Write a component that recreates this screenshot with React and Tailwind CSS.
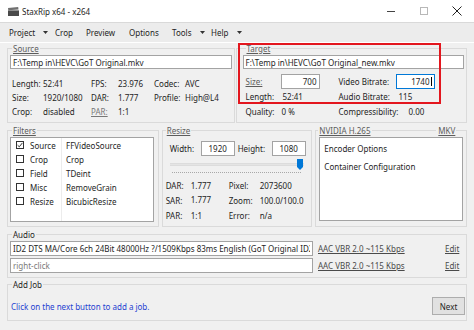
import React from "react";

function Arrow() {
  return (
    <svg width="5" height="3" viewBox="0 0 5 3" className="block shrink-0">
      <path d="M0 0H5L2.5 3Z" fill="#333" />
    </svg>
  );
}

function MenuItem({ label, w, tw, arrow }) {
  return (
    <div className={"flex items-center shrink-0 " + w}>
      <span className={"shrink-0 " + (tw || "")}>{label}</span>
      {arrow && <Arrow />}
    </div>
  );
}

function Box({ className = "", children }) {
  return (
    <div
      className={
        "bg-white border border-[#a3a3a3] flex items-center px-[2px] overflow-hidden whitespace-nowrap " +
        className
      }
    >
      {children}
    </div>
  );
}

function Legend({ children, className = "" }) {
  return (
    <legend className={"px-[1px] leading-[11px] " + className}>{children}</legend>
  );
}

function Check({ on }) {
  return (
    <div className="w-[8px] h-[8px] border border-[#333] bg-white shrink-0 flex items-center justify-center">
      {on && (
        <svg width="6" height="6" viewBox="0 0 6 6">
          <path d="M0.6 3.2L2.3 4.8L5.4 0.9" stroke="#222" strokeWidth="0.9" fill="none" />
        </svg>
      )}
    </div>
  );
}

export default function App() {
  const filters = [
    ["Source", "FFVideoSource", true],
    ["Crop", "Crop", false],
    ["Field", "TDeint", false],
    ["Misc", "RemoveGrain", false],
    ["Resize", "BicubicResize", false],
  ];
  return (
    <div className="relative w-[474px] h-[330px] overflow-hidden bg-[#f0f0f0] font-['Noto_Sans',sans-serif] text-[8px] leading-[11px] text-[#1e1e1e]">
      {/* Title bar */}
      <div className="h-[22px] bg-white flex items-center">
        <svg className="ml-[8px] shrink-0" width="11" height="9" viewBox="0 0 11 9">
          <path d="M0 3.4H11V9H0Z" fill="#4a4a4a" />
          <path d="M0 0.9L10.2 0L10.5 2.5L0.3 3.3Z" fill="#707070" />
        </svg>
        <span className="ml-[3px]">StaxRip x64 - x264</span>
        <div className="ml-auto flex h-full">
          <div className="w-[32px] flex items-center justify-center">
            <div className="w-[8px] h-px bg-[#444]" />
          </div>
          <div className="w-[33px] flex items-center justify-center">
            <div className="w-[8px] h-[8px] border border-[#b8b8b8]" />
          </div>
          <div className="w-[34px] flex items-center justify-center">
            <svg width="10" height="10" viewBox="0 0 10 10">
              <path d="M0.5 0.5L9.5 9.5M9.5 0.5L0.5 9.5" stroke="#222" strokeWidth="1" />
            </svg>
          </div>
        </div>
      </div>

      {/* Menu bar */}
      <div className="h-[21px] border-t border-t-[#d9d9d9] border-b border-b-white bg-[#ececec] flex items-center pl-[9px]">
        <MenuItem label="Project" w="w-[46px]" tw="w-[34px]" arrow />
        <MenuItem label="Crop" w="w-[31px]" />
        <MenuItem label="Preview" w="w-[43px]" />
        <MenuItem label="Options" w="w-[43px]" />
        <MenuItem label="Tools" w="w-[39px]" tw="w-[28px]" arrow />
        <MenuItem label="Help" w="w-[40px]" tw="w-[26px]" arrow />
      </div>

      <div className="px-[7px]">
        {/* Row 1 */}
        <div className="flex gap-[1px]">
          <fieldset className="w-[228px] h-[80px] min-w-0 border border-[#dadada]">
            <Legend className="ml-[4px] underline text-[#5c5c5c]">Source</Legend>
            <Box className="h-[14px] mt-[1px] mx-[2px]">F:\Temp in\HEVC\GoT Original.mkv</Box>
            <div className="mt-[7px] pl-[4px] flex flex-col">
              <div className="h-[14px] flex items-center whitespace-nowrap">
                <span className="w-[31px]">Length:</span>
                <span className="w-[48px]">52:41</span>
                <span className="w-[27px]">FPS:</span>
                <span className="w-[36px]">23.976</span>
                <span className="w-[31px]">Codec:</span>
                <span>AVC</span>
              </div>
              <div className="h-[14px] flex items-center whitespace-nowrap">
                <span className="w-[31px]">Size:</span>
                <span className="w-[48px]">1920/1080</span>
                <span className="w-[27px]">DAR:</span>
                <span className="w-[36px]">1.777</span>
                <span className="w-[31px]">Profile:</span>
                <span>High@L4</span>
              </div>
              <div className="h-[14px] flex items-center whitespace-nowrap">
                <span className="w-[31px]">Crop:</span>
                <span className="w-[48px]">disabled</span>
                <span className="w-[27px] underline text-[#777]">PAR:</span>
                <span className="w-[36px]">1:1</span>
              </div>
            </div>
          </fieldset>

          <fieldset className="w-[232px] h-[80px] min-w-0 border border-[#dadada]">
            <Legend className="ml-[9px] underline text-[#5c5c5c]">Target</Legend>
            <Box className="h-[14px] mt-[1px] ml-[6px] mr-[2px]">F:\Temp in\HEVC\GoT Original_new.mkv</Box>
            <div className="mt-[5px] pl-[9px] flex flex-col">
              <div className="h-[15px] flex items-center whitespace-nowrap">
                <span className="w-[35px] underline text-[#5c5c5c]">Size:</span>
                <Box className="w-[39px] h-[15px] justify-end">700</Box>
                <span className="w-[19px]" />
                <span className="w-[57px]">Video Bitrate:</span>
                <div className="w-[39px] h-[15px] bg-white border border-[#0078d7] flex items-center justify-end px-[2px]">
                  1740<span className="w-px h-[9px] bg-black ml-px" />
                </div>
              </div>
              <div className="h-[15px] flex items-center whitespace-nowrap">
                <span className="w-[37px]">Length:</span>
                <span className="w-[56px]">52:41</span>
                <span className="w-[60px]">Audio Bitrate:</span>
                <span>115</span>
              </div>
              <div className="h-[15px] flex items-center whitespace-nowrap">
                <span className="w-[36px]">Quality:</span>
                <span className="w-[57px]">0 %</span>
                <span className="w-[70px]">Compressibility:</span>
                <span>0.00</span>
              </div>
            </div>
          </fieldset>
        </div>

        {/* Row 2 */}
        <div className="flex gap-[3px] mt-[2px]">
          <fieldset className="w-[152px] h-[102px] min-w-0 border border-[#dadada]">
            <Legend className="ml-[4px] underline text-[#5c5c5c]">Filters</Legend>
            <div className="mt-[1px] ml-[2px] w-[144px] h-[85px] bg-white border border-[#a3a3a3] flex">
              <div className="w-[50px] flex flex-col pl-[5px]">
                {filters.map(([a, , on]) => (
                  <div key={a} className="h-[14px] flex items-center">
                    <Check on={on} />
                    <span className="ml-[6px]">{a}</span>
                  </div>
                ))}
              </div>
              <div className="flex-1 border-l border-[#ececec] flex flex-col pl-[4px]">
                {filters.map(([a, b]) => (
                  <div key={a} className="h-[14px] flex items-center">{b}</div>
                ))}
              </div>
            </div>
          </fieldset>

          <fieldset className="w-[151px] h-[102px] min-w-0 border border-[#dadada]">
            <Legend className="ml-[3px] underline text-[#5c5c5c]">Resize</Legend>
            <div className="mt-[5px] h-[15px] pl-[7px] flex items-center whitespace-nowrap">
              <span className="w-[31px]">Width:</span>
              <Box className="w-[34px] h-[15px] justify-center">1920</Box>
              <span className="w-[37px] pl-[3px]">Height:</span>
              <Box className="w-[34px] h-[15px] justify-center">1080</Box>
            </div>
            <div className="relative h-[20px] mx-[7px]">
              <div className="absolute left-0 right-0 top-[7px] h-[3px] bg-[#e4e4e4] border-y border-[#dcdcdc]" />
              <div className="absolute left-[2px] right-[3px] top-[16px] border-t border-dotted border-[#a8a8a8]" />
              <svg className="absolute right-[1px] top-[3px]" width="6" height="11" viewBox="0 0 6 11">
                <path d="M0 0H6V8L3 11L0 8Z" fill="#0078d7" />
              </svg>
            </div>
            <div className="mt-[2px] pl-[3px] flex flex-col">
              <div className="h-[15px] flex items-center whitespace-nowrap">
                <span className="w-[25px]">DAR:</span>
                <span className="w-[38px]">1.777</span>
                <span className="w-[31px]">Pixel:</span>
                <span>2073600</span>
              </div>
              <div className="h-[15px] flex items-center whitespace-nowrap">
                <span className="w-[25px]">SAR:</span>
                <span className="w-[38px] -mt-[3px]">1.777</span>
                <span className="w-[31px]">Zoom:</span>
                <span>100.0/100.0</span>
              </div>
              <div className="h-[15px] flex items-center whitespace-nowrap">
                <span className="w-[25px]">PAR:</span>
                <span className="w-[38px]">1:1</span>
                <span className="w-[31px]">Error:</span>
                <span>n/a</span>
              </div>
            </div>
          </fieldset>

          <fieldset className="w-[152px] h-[102px] min-w-0 border border-[#dadada]">
            <legend className="ml-[2px] w-[138px] leading-[11px] flex items-center px-[1px]">
              <span className="underline text-[#5c5c5c]">NVIDIA H.265</span>
              <span className="flex-1 h-px bg-[#dadada] mx-[2px]" />
              <span className="underline text-[#5c5c5c]">MKV</span>
            </legend>
            <div className="mt-[1px] ml-[3px] w-[144px] h-[84px] bg-white border border-[#a3a3a3] pl-[4px] pt-[1px] flex flex-col">
              <div className="h-[18px] flex items-center">Encoder Options</div>
              <div className="h-[18px] flex items-center">Container Configuration</div>
            </div>
          </fieldset>
        </div>

        {/* Audio */}
        <fieldset className="mt-[2px] h-[49px] min-w-0 border border-[#dadada]">
          <Legend className="ml-[4px]">Audio</Legend>
          <div className="mt-[1px] h-[15px] flex items-center whitespace-nowrap">
            <Box className="ml-[2px] w-[303px] h-[15px] shrink-0">
              <span className="block w-full overflow-hidden">ID2 DTS MA/Core 6ch 24Bit 48000Hz ?/1509Kbps 83ms English (GoT Original ID2</span>
            </Box>
            <span className="ml-[5px] w-[127px] underline text-[#4a4a4a]">AAC VBR 2.0 ~115 Kbps</span>
            <span className="underline text-[#4a4a4a]">Edit</span>
          </div>
          <div className="mt-[2px] h-[15px] flex items-center whitespace-nowrap">
            <Box className="ml-[2px] w-[303px] h-[15px] shrink-0 text-[#7a7a7a]">right-click</Box>
            <span className="ml-[5px] w-[127px] underline text-[#4a4a4a]">AAC VBR 2.0 ~115 Kbps</span>
            <span className="underline text-[#4a4a4a]">Edit</span>
          </div>
        </fieldset>

        {/* Add Job */}
        <fieldset className="mt-[1px] h-[42px] min-w-0 border border-[#dadada]">
          <Legend className="ml-[4px]">Add Job</Legend>
          <div className="mt-[7px] h-[18px] flex items-center">
            <span className="flex-1 pl-[3px] text-[#1f3fd0]">Click on the next button to add a job.</span>
            <div className="w-[33px] h-[18px] mr-[1px] bg-[#e1e1e1] border border-[#adadad] flex items-center justify-center">
              Next
            </div>
          </div>
        </fieldset>
      </div>

      {/* Red annotation box */}
      <div className="absolute left-[238px] top-[43px] w-[203px] h-[61px] border-2 border-[#e3161e] pointer-events-none" />
    </div>
  );
}
